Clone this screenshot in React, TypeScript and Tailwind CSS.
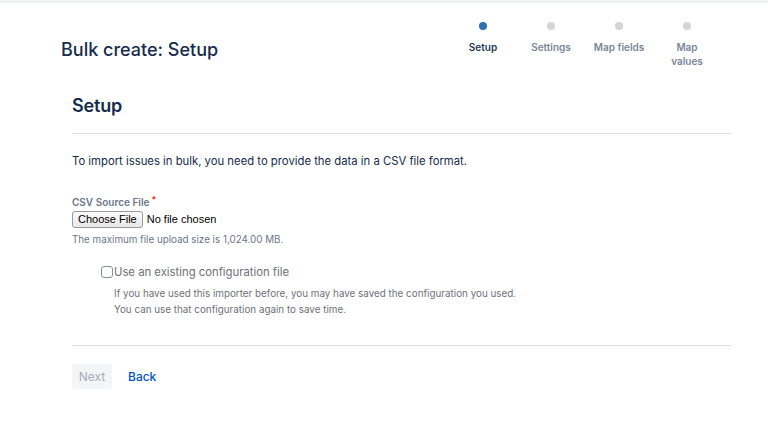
import React from "react";

const steps = [
  { label: ["Setup"], active: true },
  { label: ["Settings"], active: false },
  { label: ["Map fields"], active: false },
  { label: ["Map", "values"], active: false },
];

export default function App() {
  return (
    <div
      className="w-[768px] h-[423px] bg-white overflow-hidden border-t-[3px] border-[#f1f2f4]"
      style={{ fontFamily: 'Inter, "Noto Sans", sans-serif' }}
    >
      {/* Header */}
      <div className="flex items-start pl-[61px] pr-[47px] pt-[19px]">
        <h1 className="mt-[16px] text-[18px] leading-[24px] font-medium text-[#172b4d]">
          Bulk create: Setup
        </h1>
        <div className="ml-auto flex">
          {steps.map((s, i) => (
            <div key={i} className="w-[68px] flex flex-col items-center">
              <div
                className={
                  "w-[8px] h-[8px] rounded-full " +
                  (s.active ? "bg-[#2f6db5]" : "bg-[#d3d5d9]")
                }
              />
              <div
                className={
                  "mt-[10px] text-[10px] leading-[14px] font-semibold text-center " +
                  (s.active ? "text-[#253858]" : "text-[#7a8699]")
                }
              >
                {s.label.map((l, j) => (
                  <div key={j}>{l}</div>
                ))}
              </div>
            </div>
          ))}
        </div>
      </div>

      {/* Content */}
      <div className="mx-[72px] w-[659px]">
        <h2 className="mt-[26px] text-[18px] leading-[24px] font-semibold text-[#172b4d] tracking-[-0.01em]">
          Setup
        </h2>
        <div className="mt-[15px] h-px bg-[#dcdfe4]" />
        <p className="mt-[19px] text-[11.3px] leading-[16px] text-[#172b4d]">
          To import issues in bulk, you need to provide the data in a CSV file format.
        </p>

        <div className="mt-[26px]">
          <div className="text-[10px] leading-[14px] font-semibold text-[#6b778c]">
            CSV Source File
            <span className="text-[#de350b] relative -top-[3px] ml-[2px] text-[9px]">*</span>
          </div>
          <div
            className="flex items-center h-[18px]"
            style={{ fontFamily: '"Liberation Sans", Arial, sans-serif' }}
          >
            <button className="h-[17px] px-[5px] border border-[#9a9a9a] rounded-[3px] bg-gradient-to-b from-[#fbfbfb] to-[#e8e8e8] text-[11px] leading-[15px] text-black">
              Choose File
            </button>
            <span className="ml-[4px] text-[11px] text-black">No file chosen</span>
          </div>
          <div className="mt-[5px] text-[9.8px] leading-[14px] text-[#6b778c]">
            The maximum file upload size is 1,024.00 MB.
          </div>
        </div>

        <div className="mt-[16px] ml-[29px]">
          <label className="flex items-center h-[18px]">
            <span className="w-[12px] h-[12px] border border-[#8a8f96] rounded-[3px] bg-white" />
            <span className="ml-[1px] text-[11.3px] leading-[18px] text-[#6e7177]">
              Use an existing configuration file
            </span>
          </label>
          <div className="ml-[13px] mt-[4px] text-[9.85px] leading-[16px] text-[#6e7177]">
            <div>If you have used this importer before, you may have saved the configuration you used.</div>
            <div>You can use that configuration again to save time.</div>
          </div>
        </div>

        <div className="mt-[28px] h-px bg-[#dcdfe4]" />

        <div className="mt-[18px] flex items-center">
          <button className="w-[40px] h-[25px] rounded-[3px] bg-[#f4f5f7] text-[12px] text-[#a5adba]">
            Next
          </button>
          <button className="ml-[16px] text-[12px] font-medium text-[#0052cc]">Back</button>
        </div>
      </div>
    </div>
  );
}
